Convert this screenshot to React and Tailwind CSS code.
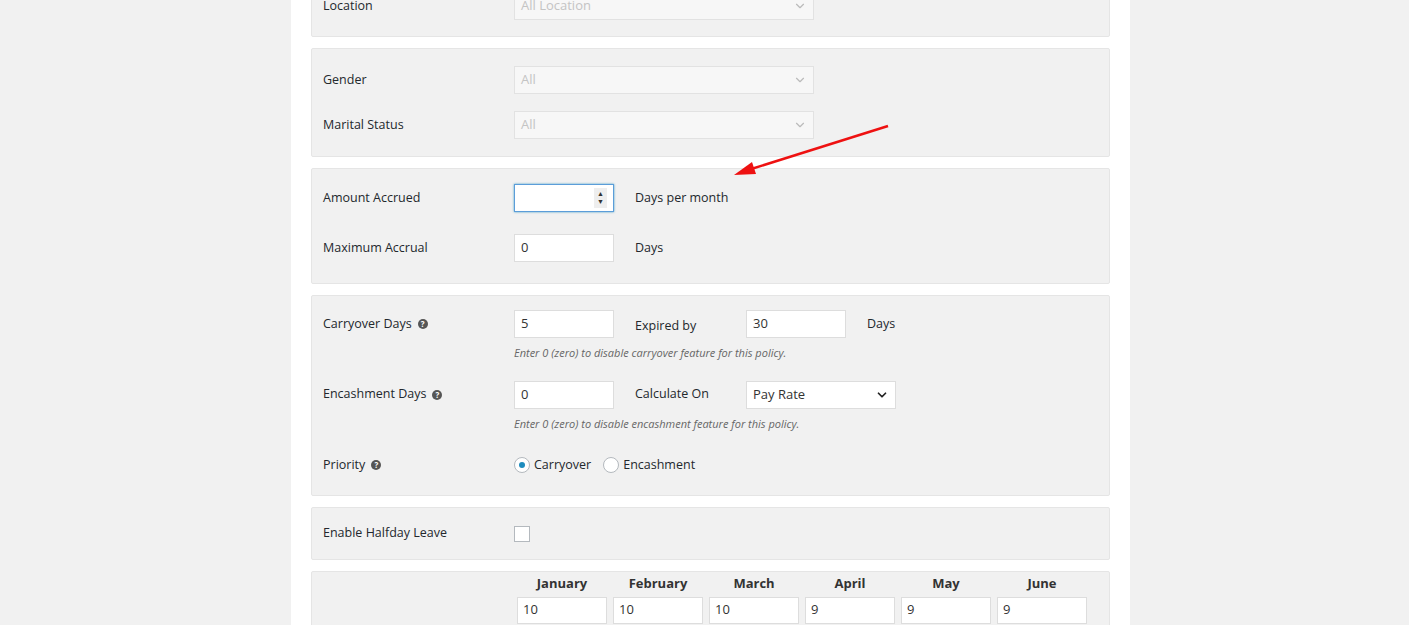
import { ChevronDown } from "lucide-react";

const font = { fontFamily: '"Open Sans", "Liberation Sans", sans-serif' };

function Help() {
  return (
    <span className="ml-[6px] inline-flex h-[10px] w-[10px] items-center justify-center rounded-full bg-[#555] text-[8px] font-bold leading-none text-white">
      ?
    </span>
  );
}

function DisabledSelect({ value }) {
  return (
    <div className="flex h-[28px] w-[300px] items-center justify-between border border-[#e2e2e2] bg-[#f7f7f7] px-[6px] text-[13px] text-[#c4c4c4]">
      <span>{value}</span>
      <ChevronDown size={14} strokeWidth={2} className="text-[#bbb]" />
    </div>
  );
}

function Input({ value, focus, w = "w-[100px]" }) {
  return (
    <div
      className={`flex h-[28px] ${w} items-center justify-between bg-white px-[6px] text-[13px] text-[#333] ${
        focus ? "border border-[#5b9dd9] shadow-[0_0_2px_rgba(30,140,190,0.8)]" : "border border-[#ddd]"
      }`}
    >
      <span>{value}</span>
      {focus && (
        <span className="flex h-[20px] w-[13px] flex-col items-center justify-center bg-[#eee] text-[7px] leading-[8px] text-[#333]">
          <span>▲</span>
          <span>▼</span>
        </span>
      )}
    </div>
  );
}

function Row({ label, help, children, className = "" }) {
  return (
    <div className={`flex items-center ${className}`}>
      <div className="flex w-[191px] items-center text-[12.5px] text-[#23282d]">
        {label}
        {help && <Help />}
      </div>
      {children}
    </div>
  );
}

function Section({ children, className = "" }) {
  return (
    <div className={`rounded-[2px] border border-[#e5e5e5] bg-[#f1f1f1] px-[11px] ${className}`}>{children}</div>
  );
}

const Note = ({ children }) => (
  <div className="ml-[191px] mt-[7px] text-[11px] italic text-[#666]">{children}</div>
);

export default function App() {
  const months = [
    ["January", "10"],
    ["February", "10"],
    ["March", "10"],
    ["April", "9"],
    ["May", "9"],
    ["June", "9"],
  ];
  return (
    <div style={font} className="relative h-[625px] overflow-hidden bg-[#f1f1f1]">
      <div className="ml-[291px] h-[700px] w-[839px] bg-white px-[20px]">
        <div className="-mt-[19px] flex flex-col gap-[11px]">
          <Section className="pb-[16px] pt-[10px]">
            <Row label="Location">
              <DisabledSelect value="All Location" />
            </Row>
          </Section>

          <Section className="flex h-[109px] flex-col justify-center gap-[17px]">
            <Row label="Gender">
              <DisabledSelect value="All" />
            </Row>
            <Row label="Marital Status">
              <DisabledSelect value="All" />
            </Row>
          </Section>

          <Section className="flex h-[116px] flex-col gap-[22px] pt-[15px]">
            <Row label="Amount Accrued">
              <Input value="" focus />
              <span className="ml-[21px] text-[12.5px] text-[#23282d]">Days per month</span>
            </Row>
            <Row label="Maximum Accrual">
              <Input value="0" />
              <span className="ml-[21px] text-[12.5px] text-[#23282d]">Days</span>
            </Row>
          </Section>

          <Section className="h-[201px] pt-[14px]">
            <Row label="Carryover Days" help>
              <Input value="5" />
              <span className="ml-[21px] mt-[4px] w-[111px] text-[12.5px] text-[#23282d]">Expired by</span>
              <Input value="30" />
              <span className="ml-[21px] text-[12.5px] text-[#23282d]">Days</span>
            </Row>
            <Note>Enter 0 (zero) to disable carryover feature for this policy.</Note>
            <Row label="Encashment Days" help className="mt-[19px]">
              <Input value="0" />
              <span className="ml-[21px] w-[111px] text-[12.5px] text-[#23282d]">Calculate On</span>
              <div className="flex h-[28px] w-[150px] items-center justify-between border border-[#ddd] bg-white px-[6px] text-[13px] text-[#333]">
                <span>Pay Rate</span>
                <ChevronDown size={14} strokeWidth={3} className="text-[#222]" />
              </div>
            </Row>
            <Note>Enter 0 (zero) to disable encashment feature for this policy.</Note>
            <Row label="Priority" help className="mt-[24px]">
              <div className="flex items-center text-[12.5px] text-[#23282d]">
                <span className="mr-[4px] flex h-[16px] w-[16px] items-center justify-center rounded-full border border-[#b4b9be] bg-white">
                  <span className="h-[6px] w-[6px] rounded-full bg-[#1e8cbe]" />
                </span>
                Carryover
                <span className="ml-[12px] mr-[4px] h-[16px] w-[16px] rounded-full border border-[#b4b9be] bg-white" />
                Encashment
              </div>
            </Row>
          </Section>

          <Section className="flex h-[53px] items-center">
            <Row label="Enable Halfday Leave">
              <span className="h-[16px] w-[16px] border border-[#b4b9be] bg-white" />
            </Row>
          </Section>

          <Section className="h-[80px] pl-[205px] pt-[2px]">
            <div className="flex gap-[6px]">
              {months.map(([m, v]) => (
                <div key={m} className="flex w-[90px] flex-col items-center">
                  <span className="text-[13px] font-bold text-[#333]">{m}</span>
                  <div className="mt-[3px] flex h-[27px] w-[90px] items-center border border-[#ddd] bg-white px-[5px] text-[13px] text-[#333]">
                    {v}
                  </div>
                </div>
              ))}
            </div>
          </Section>
        </div>
      </div>
      <svg className="absolute left-0 top-0" width="1409" height="625">
        <line x1="888" y1="126" x2="748" y2="170" stroke="#e11" strokeWidth="2.5" />
        <polygon points="734,175 752,162 756,174" fill="#e11" />
      </svg>
    </div>
  );
}
